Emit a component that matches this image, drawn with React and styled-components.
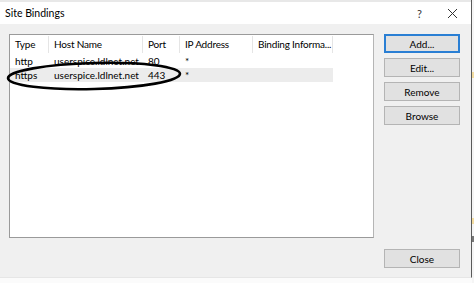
import React from 'react';
import styled, { createGlobalStyle } from 'styled-components';

const GlobalStyle = createGlobalStyle`
  html, body {
    margin: 0;
    padding: 0;
    background: #fbfbfb;
  }
  body {
    font-family: "Segoe UI", Lato, "Noto Sans", sans-serif;
    color: #000;
  }
`

const columns = [
    { label: 'Type', width: 39 },
    { label: 'Host Name', width: 94 },
    { label: 'Port', width: 37 },
    { label: 'IP Address', width: 73 },
    { label: 'Binding Informa...', width: 80 },
]

const bindings = [
    ['http', 'userspice.ldlnet.net', '80', '*', ''],
    ['https', 'userspice.ldlnet.net', '443', '*', ''],
]

export default function App() {
    return (
        <Page>
            <GlobalStyle />
            <Window>
                <TitleBar>
                    <Title>Site Bindings</Title>
                    <TitleButtons>
                        <Help>?</Help>
                        <CloseX>
                            <svg width="11" height="11" viewBox="0 0 11 11">
                                <path d="M1 1 L10 10 M10 1 L1 10" stroke="#333" strokeWidth="1" fill="none" />
                            </svg>
                        </CloseX>
                    </TitleButtons>
                </TitleBar>
                <Body>
                    <ListPanel>
                        <HeaderRow>
                            {columns.map((c, i) => (
                                <HeaderCell key={i} w={c.width}>{c.label}</HeaderCell>
                            ))}
                        </HeaderRow>
                        {bindings.map((row, r) => (
                            <Row key={r} selected={r === 1}>
                                {row.map((v, i) => (
                                    <Cell key={i} w={columns[i].width}>{v}</Cell>
                                ))}
                            </Row>
                        ))}
                        <Marker width="180" height="32" viewBox="0 0 180 32">
                            <ellipse cx="88" cy="16" rx="86" ry="13" transform="rotate(-1.5 88 16)"
                                fill="none" stroke="#000" strokeWidth="2.6" />
                        </Marker>
                    </ListPanel>
                    <ButtonColumn>
                        <Button primary>Add...</Button>
                        <Button>Edit...</Button>
                        <Button>Remove</Button>
                        <Button>Browse</Button>
                        <Spacer />
                        <Button>Close</Button>
                    </ButtonColumn>
                </Body>
            </Window>
            <Behind>
                <Tick top={72} color="#f3dca0" />
                <Tick top={218} color="#f3dca0" />
                <Tick top={236} color="#777" />
            </Behind>
        </Page>
    );
}

const Page = styled.div`
    display: flex;
    width: 474px;
    height: 283px;
    overflow: hidden;
`
const Window = styled.div`
    display: flex;
    flex-direction: column;
    width: 471px;
    height: 277px;
    border-right: 1px solid #5a5a5a;
    border-bottom: 1px solid #e6e6e6;
`
const TitleBar = styled.div`
    display: flex;
    align-items: center;
    justify-content: space-between;
    height: 22px;
    background: #fff;
    border-top: 2px solid #e8e8e8;
    padding-left: 5px;
`
const Title = styled.span`
    font-size: 10.5px;
`
const TitleButtons = styled.div`
    display: flex;
    align-items: center;
`
const Help = styled.span`
    width: 30px;
    font-size: 11px;
    color: #333;
`
const CloseX = styled.span`
    display: flex;
    width: 24px;
`
const Body = styled.div`
    flex: 1;
    display: flex;
    background: #f0f0f0;
    padding: 10px 0 9px 9px;
`
const ListPanel = styled.div`
    position: relative;
    width: 363px;
    height: 201px;
    background: #fff;
    border: 1px solid #9a9a9a;
    border-right-color: #b5b5b5;
    padding-top: 1px;
`
const HeaderRow = styled.div`
    display: flex;
    height: 17px;
    margin-bottom: 1px;
`
const HeaderCell = styled.div`
    width: ${p => p.w}px;
    box-sizing: border-box;
    padding-left: 5px;
    font-size: 10px;
    letter-spacing: -0.2px;
    line-height: 17px;
    white-space: nowrap;
    border-right: 1px solid #e5e5e5;
`
const Row = styled.div`
    display: flex;
    width: 323px;
    height: 14px;
    background: ${p => (p.selected ? '#ececec' : 'transparent')};
`
const Cell = styled.div`
    width: ${p => p.w}px;
    box-sizing: border-box;
    padding-left: 5px;
    font-size: 10px;
    line-height: 14px;
    white-space: nowrap;
`
const Marker = styled.svg`
    position: absolute;
    left: -4px;
    top: 25px;
`
const ButtonColumn = styled.div`
    display: flex;
    flex-direction: column;
    gap: 5px;
    width: 76px;
    margin-left: 10px;
`
const Button = styled.div`
    height: 19px;
    box-sizing: border-box;
    display: flex;
    align-items: center;
    justify-content: center;
    font-size: 10px;
    background: #e1e1e1;
    border: ${p => (p.primary ? '2px solid #2a7fd4' : '1px solid #b4b4b4')};
`
const Spacer = styled.div`
    flex: 1;
`
const Behind = styled.div`
    position: relative;
    flex: 1;
    background: #f5f5f5;
`
const Tick = styled.div`
    position: absolute;
    left: 0;
    right: 0;
    top: ${p => p.top}px;
    height: 6px;
    background: ${p => p.color};
`
